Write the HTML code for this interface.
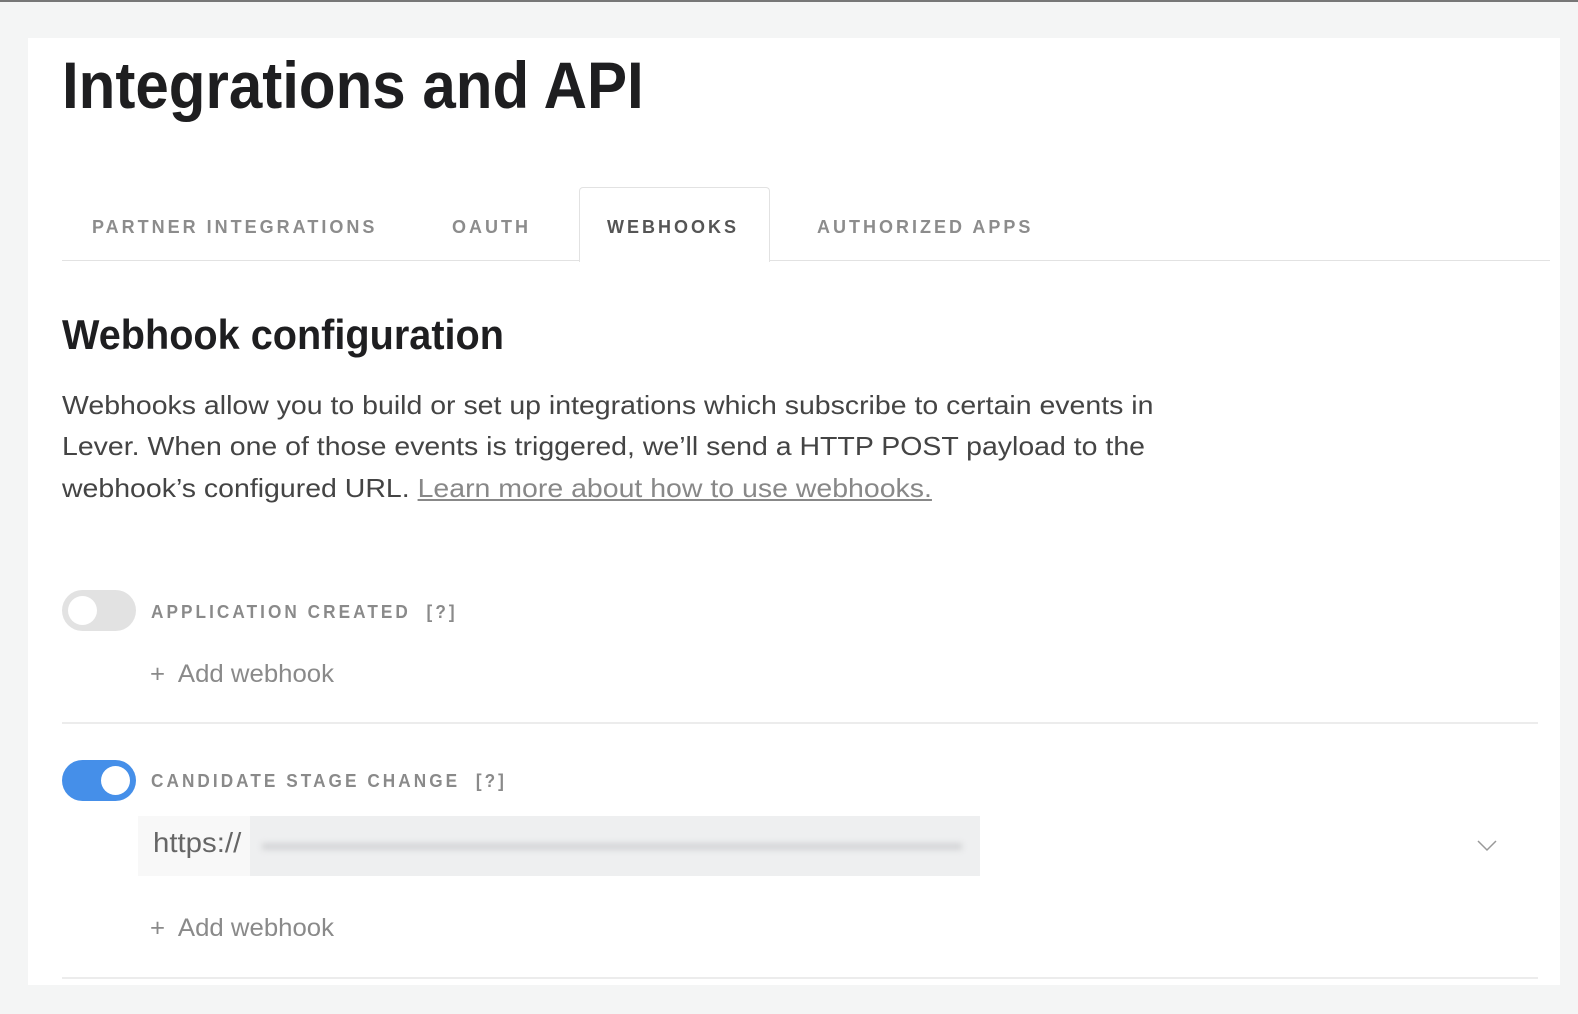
<!DOCTYPE html>
<html><head><meta charset="utf-8"><style>
*{margin:0;padding:0;box-sizing:border-box}
body{width:1578px;height:1014px;background:#f4f5f5;position:relative;overflow:hidden;font-family:"Liberation Sans",sans-serif}
.top{position:absolute;left:0;top:0;width:1578px;height:2px;background:#777}
.card{position:absolute;left:28px;top:38px;width:1532px;height:947px;background:#fff}
.t{position:absolute;white-space:nowrap;transform-origin:0 0;line-height:1}
.tab{font-size:18px;letter-spacing:3px;color:#8c8c8c;font-weight:bold}
.line{position:absolute;height:2px;background:#ececec}
.tg{position:absolute;width:74px;height:41px;border-radius:21px}
.kn{position:absolute;top:6px;width:29px;height:29px;border-radius:50%;background:#fff}
.lab{font-size:18px;letter-spacing:3.2px;color:#8a8a8a;font-weight:bold}
.add{font-size:25px;color:#8a8a8a}
.body{font-size:26px;color:#444}
</style></head><body>
<div class="top"></div>
<div class="card"></div>
<div class="t" style="left:62px;top:52px;font-size:66px;font-weight:bold;color:#1e1e20;transform:scaleX(0.91)">Integrations and API</div>

<div class="line" style="left:62px;top:260px;width:1488px;height:1px;background:#e2e2e2"></div>
<div style="position:absolute;left:579px;top:187px;width:191px;height:75px;background:#fff;border:1px solid #e2e2e2;border-bottom:none;border-radius:4px 4px 0 0"></div>
<div class="t tab" style="left:92px;top:218px">PARTNER INTEGRATIONS</div>
<div class="t tab" style="left:452px;top:218px">OAUTH</div>
<div class="t tab" style="left:607px;top:218px;color:#555">WEBHOOKS</div>
<div class="t tab" style="left:817px;top:218px">AUTHORIZED APPS</div>

<div class="t" style="left:62px;top:314px;font-size:42px;font-weight:bold;color:#1e1e20;transform:scaleX(0.944)">Webhook configuration</div>
<div class="t body" style="left:62px;top:392px;transform:scaleX(1.095)">Webhooks allow you to build or set up integrations which subscribe to certain events in</div>
<div class="t body" style="left:62px;top:433px;transform:scaleX(1.095)">Lever. When one of those events is triggered, we’ll send a HTTP POST payload to the</div>
<div class="t body" style="left:62px;top:475px;transform:scaleX(1.095)">webhook’s configured URL. <span style="color:#888;text-decoration:underline">Learn more about how to use webhooks.</span></div>

<div class="tg" style="left:62px;top:590px;background:#e2e2e2"><div class="kn" style="left:6px"></div></div>
<div class="t lab" style="left:151px;top:603px;transform:scaleX(0.955)">APPLICATION CREATED&nbsp; [?]</div>
<div class="t add" style="left:150px;top:662px;transform:scaleX(1.03)">+&nbsp; Add webhook</div>
<div class="line" style="left:62px;top:722px;width:1476px"></div>

<div class="tg" style="left:62px;top:760px;background:#458fe9"><div class="kn" style="left:39px"></div></div>
<div class="t lab" style="left:151px;top:772px;transform:scaleX(0.955)">CANDIDATE STAGE CHANGE&nbsp; [?]</div>
<div style="position:absolute;left:138px;top:816px;width:842px;height:60px;background:#f8f8f8"></div>
<div style="position:absolute;left:250px;top:816px;width:730px;height:60px;background:#eeeff0"></div>
<div style="position:absolute;left:262px;top:843px;width:700px;height:7px;background:#d4d5d7;filter:blur(3px)"></div>
<div class="t" style="left:153px;top:829px;font-size:28px;color:#666;transform:scaleX(1.05)">https://</div>
<svg style="position:absolute;left:1477px;top:839px" width="20" height="14" viewBox="0 0 20 14"><path d="M1 2 L10 11 L19 2" fill="none" stroke="#999" stroke-width="1.5"/></svg>
<div class="t add" style="left:150px;top:916px;transform:scaleX(1.03)">+&nbsp; Add webhook</div>
<div class="line" style="left:62px;top:977px;width:1476px"></div>
</body></html>
